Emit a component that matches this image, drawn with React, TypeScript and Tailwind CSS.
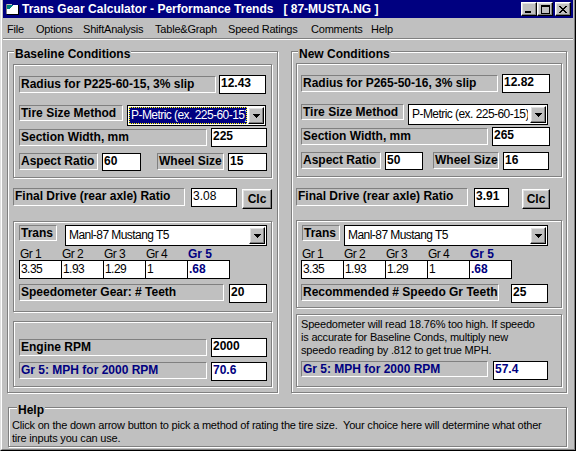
import React from "react";

// Win95-style bevels
const sunken = "border border-t-[#808080] border-l-[#808080] border-b-white border-r-white";
const etched = "border border-[#808080] shadow-[inset_1px_1px_0_#ffffff,1px_1px_0_#ffffff]";
const raised =
  "border border-t-white border-l-white border-b-black border-r-black shadow-[inset_-1px_-1px_0_#808080,inset_1px_1px_0_#dfdfdf] bg-[#c0c0c0]";
const tight = "text-[12px] tracking-[-0.55px]";

function Label({ className = "", blue = false, children }: { className?: string; blue?: boolean; children: React.ReactNode }) {
  return (
    <div
      className={`${sunken} shrink-0 overflow-hidden whitespace-nowrap pl-[1px] text-[12px] font-bold leading-[15px] ${
        blue ? "text-[#000080]" : "text-black"
      } ${className}`}
    >
      {children}
    </div>
  );
}

function Field({
  className = "",
  regular = false,
  blue = false,
  children,
}: {
  className?: string;
  regular?: boolean;
  blue?: boolean;
  children: React.ReactNode;
}) {
  return (
    <div
      className={`shrink-0 overflow-hidden whitespace-nowrap border border-black bg-white pl-[1px] text-[12px] leading-[15px] ${
        regular ? "font-normal" : "font-bold"
      } ${blue ? "text-[#000080]" : "text-black"} ${className}`}
    >
      {children}
    </div>
  );
}

function DownArrow() {
  return (
    <svg width="7" height="4" viewBox="0 0 7 4" shapeRendering="crispEdges">
      <rect x="0" y="0" width="7" height="1" fill="#000" />
      <rect x="1" y="1" width="5" height="1" fill="#000" />
      <rect x="2" y="2" width="3" height="1" fill="#000" />
      <rect x="3" y="3" width="1" height="1" fill="#000" />
    </svg>
  );
}

function Combo({ className = "", text, selected = false }: { className?: string; text: string; selected?: boolean }) {
  return (
    <div className={`flex shrink-0 border border-black bg-white p-[1px] ${className}`}>
      <div
        className={`mr-[1px] min-w-0 flex-1 overflow-hidden whitespace-nowrap border border-dotted pl-[1px] leading-[15px] ${tight} ${
          selected ? "border-[#ffff00] bg-[#000080] text-white" : "border-transparent text-black"
        }`}
      >
        {text}
      </div>
      <div className={`${raised} flex w-[16px] shrink-0 items-center justify-center`}>
        <DownArrow />
      </div>
    </div>
  );
}

function Button({ className = "", children }: { className?: string; children: React.ReactNode }) {
  return (
    <div className={`${raised} flex shrink-0 items-center justify-center text-[12px] font-bold leading-[14px] ${className}`}>
      {children}
    </div>
  );
}

function Group({
  title,
  className = "",
  legend = "left-[6px]",
  children,
}: {
  title: string;
  className?: string;
  legend?: string;
  children: React.ReactNode;
}) {
  return (
    <div className={`relative ${etched} ${className}`}>
      <span className={`absolute -top-[5px] ${legend} bg-[#c0c0c0] px-[1px] text-[12px] font-bold leading-[14px]`}>{title}</span>
      {children}
    </div>
  );
}

function GearRow({ values }: { values: string[] }) {
  return (
    <div className="mt-[2px] flex">
      {values.map((v, i) => {
        const top = i === 4;
        return (
          <div key={i} className={`w-[43px] shrink-0 ${i > 0 ? "-ml-px" : ""}`}>
            <div
              className={`h-[12px] whitespace-nowrap pl-[1px] leading-[12px] ${
                top ? "text-[12px] font-bold text-[#000080]" : tight
              }`}
            >
              Gr {i + 1}
            </div>
            <div
              className={`h-[19px] border border-black bg-white pl-[1px] leading-[16px] ${
                top ? "text-[12px] font-bold text-[#000080]" : tight
              }`}
            >
              {v}
            </div>
          </div>
        );
      })}
    </div>
  );
}

function CapButton({ kind, className = "" }: { kind: "min" | "max" | "close"; className?: string }) {
  return (
    <div className={`${raised} flex h-[14px] w-[16px] items-center justify-center ${className}`}>
      {kind === "min" && (
        <svg width="8" height="7" viewBox="0 0 8 7" shapeRendering="crispEdges">
          <rect x="0" y="5" width="6" height="2" fill="#000" />
        </svg>
      )}
      {kind === "max" && (
        <svg width="9" height="9" viewBox="0 0 9 9" shapeRendering="crispEdges">
          <rect x="0.5" y="0.5" width="8" height="8" fill="none" stroke="#000" />
          <rect x="0" y="1" width="9" height="1" fill="#000" />
        </svg>
      )}
      {kind === "close" && (
        <svg width="8" height="7" viewBox="0 0 8 7" shapeRendering="crispEdges" fill="#000">
          <rect x="0" y="0" width="2" height="1" />
          <rect x="6" y="0" width="2" height="1" />
          <rect x="1" y="1" width="2" height="1" />
          <rect x="5" y="1" width="2" height="1" />
          <rect x="2" y="2" width="4" height="1" />
          <rect x="3" y="3" width="2" height="1" />
          <rect x="2" y="4" width="4" height="1" />
          <rect x="1" y="5" width="2" height="1" />
          <rect x="5" y="5" width="2" height="1" />
          <rect x="0" y="6" width="2" height="1" />
          <rect x="6" y="6" width="2" height="1" />
        </svg>
      )}
    </div>
  );
}

function AppIcon() {
  return (
    <svg width="13" height="12" viewBox="0 0 13 12" shapeRendering="crispEdges" className="shrink-0">
      <rect x="1" y="2" width="11" height="9" fill="#ffffff" />
      <polygon points="1,2 7,2 4,6 1,6" fill="#008080" />
      <rect x="1" y="1" width="5" height="1" fill="#c0c0c0" />
      <rect x="12" y="2" width="1" height="10" fill="#000" />
      <rect x="1" y="11" width="12" height="1" fill="#000" />
      <rect x="0" y="1" width="1" height="10" fill="#808080" />
    </svg>
  );
}

function TitleBar() {
  return (
    <div className="flex h-[18px] shrink-0 items-center bg-[#000080] pl-[3px] pr-[2px]">
      <AppIcon />
      <span className="ml-[3px] whitespace-pre text-[12px] font-bold leading-[18px] text-white">
        Trans Gear Calculator - Performance Trends   [ 87-MUSTA.NG ]
      </span>
      <div className="ml-auto flex items-center">
        <CapButton kind="min" />
        <CapButton kind="max" />
        <CapButton kind="close" className="ml-[2px]" />
      </div>
    </div>
  );
}

function MenuBar() {
  return (
    <div className="flex h-[20px] shrink-0 overflow-hidden whitespace-nowrap pl-[4px] text-[11px] leading-[22px] tracking-[-0.2px]">
      <span className="w-[29px] shrink-0">File</span>
      <span className="w-[47px] shrink-0">Options</span>
      <span className="w-[72px] shrink-0">ShiftAnalysis</span>
      <span className="w-[73px] shrink-0">Table&amp;Graph</span>
      <span className="w-[83px] shrink-0">Speed Ratings</span>
      <span className="w-[60px] shrink-0">Comments</span>
      <span className="shrink-0">Help</span>
    </div>
  );
}

function Baseline() {
  return (
    <Group title="Baseline Conditions" className="flex w-[271px] shrink-0 flex-col pl-[5px] pr-[5px] pt-[12px]">
      <div className={`${etched} pb-[6px] pl-[5px]`}>
        <div className="mt-[10px] flex items-center">
          <Label className="h-[17px] w-[197px]">Radius for P225-60-15, 3% slip</Label>
          <Field className="ml-[3px] h-[19px] w-[47px]">12.43</Field>
        </div>
        <div className="mt-[11px] flex items-start">
          <Label className="h-[16px] w-[104px]">Tire Size Method</Label>
          <Combo className="ml-[4px] h-[21px] w-[139px]" text="P-Metric (ex. 225-60-15)" selected />
        </div>
        <div className="mt-[2px] flex items-start">
          <Label className="mt-[1px] h-[17px] w-[188px]">Section Width, mm</Label>
          <Field className="ml-[4px] h-[19px] w-[56px]">225</Field>
        </div>
        <div className="mt-[6px] flex items-start">
          <Label className="h-[17px] w-[79px]">Aspect Ratio</Label>
          <Field className="ml-[4px] h-[18px] w-[39px]">60</Field>
          <Label className="ml-[16px] h-[17px] w-[67px]">Wheel Size</Label>
          <Field className="ml-[4px] h-[18px] w-[39px]">15</Field>
        </div>
      </div>

      <div className="mt-[10px] flex items-start">
        <Label className="h-[18px] w-[172px]">Final Drive (rear axle) Ratio</Label>
        <Field regular className="ml-[6px] h-[19px] w-[46px]">3.08</Field>
        <Button className="ml-[5px] mt-[1px] h-[20px] w-[30px]">Clc</Button>
      </div>

      <div className={`mt-[12px] ${etched} pb-[8px] pl-[5px]`}>
        <div className="mt-[3px] flex items-start">
          <Label className="h-[16px] w-[38px]">Trans</Label>
          <Combo className="ml-[8px] h-[21px] w-[202px]" text="Manl-87 Mustang T5" />
        </div>
        <GearRow values={["3.35", "1.93", "1.29", "1", ".68"]} />
        <div className="mt-[5px] flex items-start">
          <Label className="h-[17px] w-[205px]">Speedometer Gear: # Teeth</Label>
          <Field className="ml-[5px] h-[19px] w-[38px]">20</Field>
        </div>
      </div>

      <div className={`mt-[9px] ${etched} pb-[5px] pl-[5px] pt-[16px]`}>
        <div className="flex items-center">
          <Label className="h-[17px] w-[188px]">Engine RPM</Label>
          <Field className="ml-[4px] h-[19px] w-[56px]">2000</Field>
        </div>
        <div className="mt-[5px] flex items-start">
          <Label blue className="h-[17px] w-[188px]">
            Gr 5: MPH for 2000 RPM
          </Label>
          <Field blue className="ml-[4px] h-[19px] w-[56px]">
            70.6
          </Field>
        </div>
      </div>
    </Group>
  );
}

function NewConditions() {
  return (
    <Group title="New Conditions" className="flex min-w-0 flex-1 flex-col pl-[4px] pr-[4px] pt-[11px]">
      <div className={`${etched} pb-[6px] pl-[4px]`}>
        <div className="mt-[10px] flex items-center">
          <Label className="h-[17px] w-[197px]">Radius for P265-50-16, 3% slip</Label>
          <Field className="ml-[4px] h-[19px] w-[48px]">12.82</Field>
        </div>
        <div className="mt-[11px] flex items-start">
          <Label className="h-[16px] w-[103px]">Tire Size Method</Label>
          <Combo className="ml-[4px] h-[21px] w-[140px]" text="P-Metric (ex. 225-60-15)" />
        </div>
        <div className="mt-[2px] flex items-start">
          <Label className="mt-[1px] h-[17px] w-[187px]">Section Width, mm</Label>
          <Field className="ml-[4px] h-[19px] w-[58px]">265</Field>
        </div>
        <div className="mt-[6px] flex items-start">
          <Label className="h-[17px] w-[80px]">Aspect Ratio</Label>
          <Field className="ml-[4px] h-[18px] w-[38px]">50</Field>
          <Label className="ml-[10px] h-[17px] w-[66px]">Wheel Size</Label>
          <Field className="ml-[4px] h-[18px] w-[46px]">16</Field>
        </div>
      </div>

      <div className="mt-[11px] flex items-start">
        <Label className="h-[18px] w-[172px]">Final Drive (rear axle) Ratio</Label>
        <Field className="ml-[6px] h-[19px] w-[35px]">3.91</Field>
        <Button className="ml-[13px] mt-[1px] h-[20px] w-[28px]">Clc</Button>
      </div>

      <div className={`mt-[11px] ${etched} pb-[4px] pl-[4px]`}>
        <div className="mt-[4px] flex items-start">
          <Label className="ml-[1px] h-[16px] w-[38px]">Trans</Label>
          <Combo className="ml-[4px] h-[21px] w-[204px]" text="Manl-87 Mustang T5" />
        </div>
        <GearRow values={["3.35", "1.93", "1.29", "1", ".68"]} />
        <div className="mt-[5px] flex items-start">
          <Label className="h-[17px] w-[198px]">Recommended # Speedo Gr Teeth</Label>
          <Field className="ml-[12px] h-[19px] w-[37px]">25</Field>
        </div>
      </div>

      <div className={`mt-[6px] ${etched} pb-[6px] pl-[4px] pt-[3px]`}>
        <p className="text-[11px] leading-[13px] tracking-[-0.2px]">
          Speedometer will read 18.76% too high. If speedo
          <br />
          is accurate for Baseline Conds, multiply new
          <br />
          speedo reading by .812 to get true MPH.
        </p>
        <div className="mt-[4px] flex items-start">
          <Label blue className="h-[16px] w-[187px]">
            Gr 5: MPH for 2000 RPM
          </Label>
          <Field blue className="ml-[5px] h-[19px] w-[55px]">
            57.4
          </Field>
        </div>
      </div>
    </Group>
  );
}

export default function App() {
  return (
    <div className="h-[451px] w-full overflow-hidden bg-[#c0c0c0] font-['Liberation_Sans',Arial,sans-serif] text-black">
      <div className="flex h-full flex-col border-b border-l border-r border-b-black border-l-[#dfdfdf] border-r-black">
        <div className="flex h-full flex-col border-b border-l border-r border-b-[#808080] border-l-white border-r-[#808080] px-[1px] pb-[1px]">
          <TitleBar />
          <MenuBar />
          <div className="h-px shrink-0 bg-[#808080]" />
          <div className="h-px shrink-0 bg-white" />
          <div className="flex min-h-0 flex-1 flex-col pl-[4px] pr-[6px]">
            <div className="mt-[11px] flex h-[342px] shrink-0 gap-[13px]">
              <Baseline />
              <NewConditions />
            </div>
            <Group title="Help" legend="left-[8px]" className="ml-[1px] mt-[14px] h-[40px] shrink-0 pl-[3px] pt-[11px]">
              <p className="whitespace-pre text-[11px] leading-[13px] tracking-[-0.2px]">
                {"Click on the down arrow button to pick a method of rating the tire size.  Your choice here will determine what other"}
                <br />
                tire inputs you can use.
              </p>
            </Group>
          </div>
        </div>
      </div>
    </div>
  );
}
